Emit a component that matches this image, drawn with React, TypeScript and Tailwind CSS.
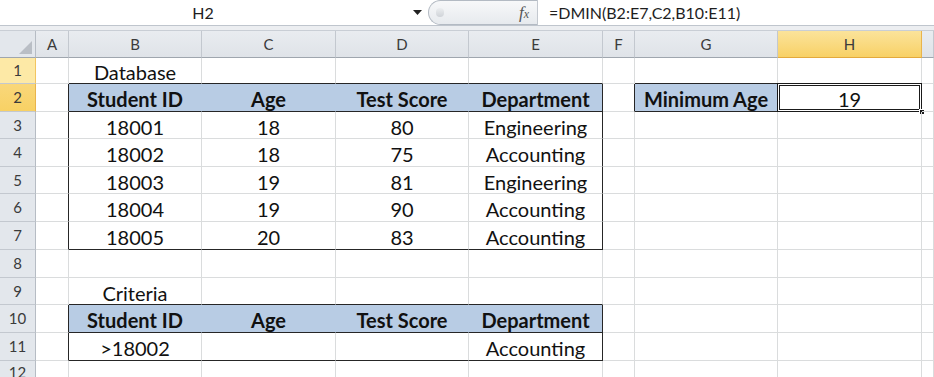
import React from "react";

const DARK = "#262626";

// sheet contents, rows 1..11, columns A..I
const rows: string[][] = [
    ["", "Database", "", "", "", "", "", "", ""],
    ["", "Student ID", "Age", "Test Score", "Department", "", "Minimum Age", "19", ""],
    ["", "18001", "18", "80", "Engineering", "", "", "", ""],
    ["", "18002", "18", "75", "Accounting", "", "", "", ""],
    ["", "18003", "19", "81", "Engineering", "", "", "", ""],
    ["", "18004", "19", "90", "Accounting", "", "", "", ""],
    ["", "18005", "20", "83", "Accounting", "", "", "", ""],
    ["", "", "", "", "", "", "", "", ""],
    ["", "Criteria", "", "", "", "", "", "", ""],
    ["", "Student ID", "Age", "Test Score", "Department", "", "", "", ""],
    ["", ">18002", "", "", "Accounting", "", "", "", ""],
    ["", "", "", "", "", "", "", "", ""],
];

const colLetters = ["A", "B", "C", "D", "E", "F", "G", "H", ""];

const isTableRow = (r: number) => (r >= 2 && r <= 7) || r === 10 || r === 11;
const isHead = (r: number, c: number) =>
    ((r === 2 || r === 10) && c >= 1 && c <= 4) || (r === 2 && c === 6);

function borderR(r: number, c: number) {
    if ((c === 0 || c === 4) && isTableRow(r)) return "border-r-[#262626]";
    if (r === 2 && (c === 5 || c === 6)) return "border-r-[#262626]";
    if (isHead(r, c)) return "border-r-[#b8cce4]";
    return "border-r-[#dadcdd]";
}

function borderB(r: number, c: number) {
    if (c >= 1 && c <= 4 && [1, 2, 7, 9, 10, 11].includes(r)) return "border-b-[#262626]";
    if (c === 6 && (r === 1 || r === 2)) return "border-b-[#262626]";
    return "border-b-[#dadcdd]";
}

function rowHeaderBg(r: number) {
    if (r === 1) return "bg-[#fde9a6] border-r-[#f2c560]";
    if (r === 2) return "bg-gradient-to-b from-[#f9d77a] to-[#f8d164] border-r-[#e9b44c]";
    return "bg-[#e3e7ec] border-r-[#b6bcc4]";
}

function FormulaBar() {
    return (
        <div className="flex h-[26px] border-b border-[#bfc5cd] bg-white text-[16px] text-[#1e1e1e]">
            <div className="flex w-[406px] items-center justify-center pt-px">H2</div>
            <div className="flex w-[22px] items-center justify-center">
                <svg width="9" height="5" viewBox="0 0 9 5">
                    <path d="M0 0h9L4.5 5z" fill="#222" />
                </svg>
            </div>
            <div className="flex w-[109px] items-center rounded-l-full border border-r-0 border-[#b3bac3] bg-gradient-to-b from-[#f7f8f9] to-[#e7eaee]">
                <div className="ml-[7px] h-[9px] w-[8px] rounded-full bg-gradient-to-b from-[#eceef0] to-[#cfd3d8]" />
                <div className="ml-auto mr-[8px] font-['Liberation_Serif',serif] text-[17px] italic leading-none text-[#555]">
                    f<span className="text-[12px]">x</span>
                </div>
            </div>
            <div className="flex flex-1 items-center border-l border-[#c3c8cf] pl-[11px] pt-px">
                =DMIN(B2:E7,C2,B10:E11)
            </div>
        </div>
    );
}

export default function App() {
    return (
        <div className="h-[377px] w-[934px] overflow-hidden bg-white font-['Lato',sans-serif]">
            <FormulaBar />
            <div className="h-[5px] border-b border-[#c9ced5] bg-[#eceef1]" />
            <div className="grid grid-cols-[36px_33px_133px_134px_133px_134px_32px_143px_144px_1fr] grid-rows-[27px_26px_28px_27px_28px_27px_28px_28px_28px_27px_28px_28px_1fr] text-[20px] text-[#111]">
                {/* corner */}
                <div className="relative border-b border-r border-b-[#9fa6ae] border-r-[#b6bcc4] bg-[#e3e7ec]">
                    <div className="absolute bottom-[3px] right-[3px] h-0 w-0 border-b-[13px] border-l-[13px] border-b-[#b9bec5] border-l-transparent" />
                </div>
                {/* column headers */}
                {colLetters.map((l, c) =>
                    c === 7 ? (
                        <div
                            key={c}
                            className="flex items-center justify-center border-b border-r border-b-[#e3a93c] border-r-[#e9b44c] bg-gradient-to-b from-[#fbe39a] to-[#f8d165] text-[15px] text-[#3b3b3b]"
                        >
                            {l}
                        </div>
                    ) : (
                        <div
                            key={c}
                            className="flex items-center justify-center border-b border-r border-b-[#9fa6ae] border-r-[#c3c8cf] bg-gradient-to-b from-[#e9ecf0] to-[#dfe3e8] text-[15px] text-[#3b3b3b]"
                        >
                            {l}
                        </div>
                    )
                )}
                {rows.map((row, i) => {
                    const r = i + 1;
                    return (
                        <React.Fragment key={r}>
                            <div
                                className={`flex items-center justify-center border-b border-r border-b-[#c3c8cf] text-[15px] text-[#3b3b3b] ${rowHeaderBg(r)}`}
                            >
                                {r}
                            </div>
                            {row.map((txt, c) => (
                                <div
                                    key={c}
                                    className={`relative flex items-center justify-center whitespace-nowrap border-b border-r leading-none ${borderR(r, c)} ${borderB(r, c)} ${
                                        isHead(r, c) ? "bg-[#b8cce4] font-bold" : ""
                                    }`}
                                >
                                    <span className="pt-[3px]">{txt}</span>
                                    {r === 2 && c === 7 && (
                                        <>
                                            <div className="pointer-events-none absolute -left-px -right-px -top-px bottom-[-1px] border border-[#1a1a1a] shadow-[inset_0_0_0_1px_#fff,inset_0_0_0_2px_#1a1a1a]" />
                                            <div className="absolute -bottom-[4px] -right-[4px] h-[6px] w-[6px] border border-white bg-[#1a1a1a]" />
                                        </>
                                    )}
                                </div>
                            ))}
                        </React.Fragment>
                    );
                })}
            </div>
        </div>
    );
}
